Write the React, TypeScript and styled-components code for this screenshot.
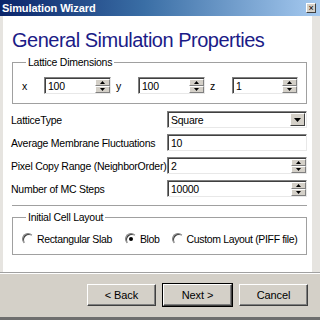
import React from "react";
import styled, { createGlobalStyle } from "styled-components";

const GlobalStyle = createGlobalStyle`
  html, body {
    margin: 0;
    padding: 0;
    background: #d4d0c8;
  }
  * {
    box-sizing: border-box;
  }
`;

const FONT = `"Liberation Sans", Arial, sans-serif`;

const Window = styled.div`
  width: 320px;
  height: 320px;
  display: flex;
  flex-direction: column;
  background: #d4d0c8;
  font-family: ${FONT};
  font-size: 10.5px;
  letter-spacing: -0.25px;
  color: #000;
  overflow: hidden;
`;

const TitleBar = styled.div`
  height: 16px;
  flex: none;
  display: flex;
  align-items: center;
  justify-content: space-between;
  padding: 0 4px 0 2px;
  background: linear-gradient(to right, #0a246a 0%, #3a6ea5 45%, #a6caf0 100%);
`;

const TitleText = styled.span`
  color: #fff;
  font-weight: bold;
  font-size: 11px;
  letter-spacing: -0.1px;
`;

const CloseBox = styled.span`
  width: 10px;
  height: 10px;
  display: flex;
  align-items: center;
  justify-content: center;
  background: #d4d0c8;
  border: 1px solid;
  border-color: #fff #404040 #404040 #fff;
  font-size: 9px;
  line-height: 1;
  color: #000;
`;

const Body = styled.div`
  flex: none;
  height: 256px;
  display: flex;
  padding: 0 8px 0 3px;
  background: #e6e4e0;
`;

const Panel = styled.div`
  flex: 1;
  background: #fff;
  padding: 0 5px 0 9px;
  display: flex;
  flex-direction: column;
`;

const Heading = styled.h1`
  margin: 12px 0 0 0;
  font-family: ${FONT};
  font-weight: normal;
  font-size: 20px;
  letter-spacing: -0.5px;
  line-height: 24px;
  color: #1b1b87;
`;

const Group = styled.fieldset<{ $top: number }>`
  margin: ${(p) => p.$top}px 0 0 0;
  padding: 8px 0 9px 9px;
  border: 1px solid #a0a0a0;
  min-width: 0;
`;

const Legend = styled.legend`
  padding: 0 2px;
  margin-left: 4px;
  line-height: 13px;
`;

const DimRow = styled.div`
  display: flex;
  align-items: center;
  gap: 5px;
`;

const DimItem = styled.div`
  display: flex;
  align-items: center;
`;

const AxisLabel = styled.span`
  width: 22px;
`;

const Sunken = styled.div<{ $w?: number }>`
  width: ${(p) => (p.$w ? `${p.$w}px` : "100%")};
  height: 17px;
  display: flex;
  align-items: stretch;
  background: #fff;
  border-top: 1px solid #808080;
  border-left: 1px solid #808080;
  border-right: 1px solid #e8e8e8;
  border-bottom: 1px solid #e8e8e8;
  box-shadow: inset 1px 1px 0 #404040;
`;

const Value = styled.span`
  flex: 1;
  padding: 1px 0 0 3px;
  line-height: 14px;
`;

const SpinCol = styled.div`
  width: 15px;
  display: flex;
  flex-direction: column;
  margin: 1px 0 0 0;
`;

const SpinBtn = styled.div`
  flex: 1;
  display: flex;
  align-items: center;
  justify-content: center;
  background: #d4d0c8;
  border: 1px solid;
  border-color: #fff #808080 #808080 #fff;
`;

const DropBtn = styled.div`
  width: 15px;
  margin: 1px 1px 1px 0;
  display: flex;
  align-items: center;
  justify-content: center;
  background: #d4d0c8;
  border: 1px solid;
  border-color: #fff #404040 #404040 #fff;
`;

const Arrow = ({ up, size = 3 }: { up?: boolean; size?: number }) => (
  <svg width={size * 2 + 1} height={size + 1} viewBox={`0 0 ${size * 2 + 1} ${size + 1}`}>
    <polygon
      points={
        up
          ? `0,${size + 1} ${size * 2 + 1},${size + 1} ${size + 0.5},0`
          : `0,0 ${size * 2 + 1},0 ${size + 0.5},${size + 1}`
      }
      fill="#000"
    />
  </svg>
);

const SpinBox = ({ value, w }: { value: string; w?: number }) => (
  <Sunken $w={w}>
    <Value>{value}</Value>
    <SpinCol>
      <SpinBtn>
        <Arrow up size={2} />
      </SpinBtn>
      <SpinBtn>
        <Arrow size={2} />
      </SpinBtn>
    </SpinCol>
  </Sunken>
);

const Form = styled.div`
  margin-top: 7px;
  display: grid;
  grid-template-columns: 155px 140px;
  row-gap: 6px;
  align-items: center;
`;

const FieldLabel = styled.span`
  margin-left: -1px;
  white-space: nowrap;
`;

const Separator = styled.div`
  margin-top: 8px;
  height: 2px;
  border-top: 1px solid #a0a0a0;
  border-bottom: 1px solid #fff;
`;

const RadioRow = styled.div`
  display: flex;
  align-items: center;
  padding-top: 1px;
  letter-spacing: -0.35px;
`;

const RadioItem = styled.label<{ $gap: number }>`
  display: flex;
  align-items: center;
  gap: 3px;
  margin-right: ${(p) => p.$gap}px;
  white-space: nowrap;
`;

const RadioCircle = styled.span<{ $on?: boolean }>`
  width: 12px;
  height: 12px;
  border-radius: 50%;
  display: flex;
  align-items: center;
  justify-content: center;
  background: #fff;
  border: 1px solid;
  border-color: #808080 #fff #fff #808080;
  box-shadow: inset 1px 1px 0 #404040;
  &::after {
    content: "";
    width: 4px;
    height: 4px;
    border-radius: 50%;
    background: ${(p) => (p.$on ? "#000" : "transparent")};
  }
`;

const Footer = styled.div`
  flex: 1;
  display: flex;
  flex-direction: column;
  background: #d4d0c8;
  border-top: 1px solid #a0a0a0;
  box-shadow: inset 0 1px 0 #fff;
  border-bottom: 3px solid #6e6e6e;
`;

const ButtonRow = styled.div`
  margin-top: 11px;
  display: flex;
  justify-content: flex-end;
  gap: 7px;
  padding-right: 12px;
`;

const Button = styled.button<{ $default?: boolean }>`
  width: 69px;
  height: 22px;
  padding: 0;
  font-family: ${FONT};
  font-size: 11px;
  letter-spacing: -0.1px;
  color: #000;
  background: #d4d0c8;
  border: 1px solid;
  border-color: #fff #404040 #404040 #fff;
  box-shadow: inset -1px -1px 0 #808080
    ${(p) => (p.$default ? ", 0 0 0 1px #000" : "")};
`;

export default function App() {
  return (
    <>
      <GlobalStyle />
      <Window>
        <TitleBar>
          <TitleText>Simulation Wizard</TitleText>
          <CloseBox>×</CloseBox>
        </TitleBar>
        <Body>
          <Panel>
            <Heading>General Simulation Properties</Heading>
            <Group $top={4}>
              <Legend>Lattice Dimensions</Legend>
              <DimRow>
                <DimItem>
                  <AxisLabel>x</AxisLabel>
                  <SpinBox value="100" w={67} />
                </DimItem>
                <DimItem>
                  <AxisLabel>y</AxisLabel>
                  <SpinBox value="100" w={67} />
                </DimItem>
                <DimItem>
                  <AxisLabel>z</AxisLabel>
                  <SpinBox value="1" w={66} />
                </DimItem>
              </DimRow>
            </Group>
            <Form>
              <FieldLabel>LatticeType</FieldLabel>
              <Sunken>
                <Value>Square</Value>
                <DropBtn>
                  <Arrow size={3} />
                </DropBtn>
              </Sunken>
              <FieldLabel>Average Membrane Fluctuations</FieldLabel>
              <Sunken>
                <Value>10</Value>
              </Sunken>
              <FieldLabel>Pixel Copy Range (NeighborOrder)</FieldLabel>
              <SpinBox value="2" />
              <FieldLabel>Number of MC Steps</FieldLabel>
              <SpinBox value="10000" />
            </Form>
            <Separator />
            <Group $top={4}>
              <Legend>Initial Cell Layout</Legend>
              <RadioRow>
                <RadioItem $gap={13}>
                  <RadioCircle />
                  Rectangular Slab
                </RadioItem>
                <RadioItem $gap={12}>
                  <RadioCircle $on />
                  Blob
                </RadioItem>
                <RadioItem $gap={0}>
                  <RadioCircle />
                  Custom Layout (PIFF file)
                </RadioItem>
              </RadioRow>
            </Group>
          </Panel>
        </Body>
        <Footer>
          <ButtonRow>
            <Button>&lt; Back</Button>
            <Button $default>Next &gt;</Button>
            <Button>Cancel</Button>
          </ButtonRow>
        </Footer>
      </Window>
    </>
  );
}
